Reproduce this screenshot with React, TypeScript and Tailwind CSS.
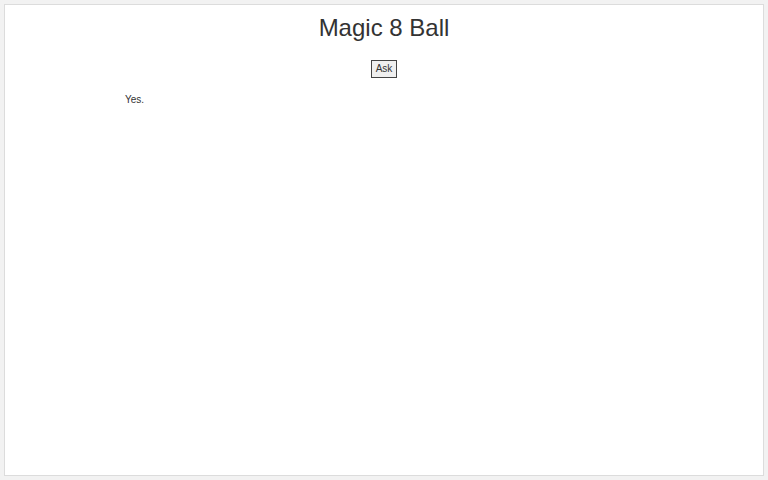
import { useState } from "react";

const answers = ["Yes.", "No.", "Maybe.", "Ask again later.", "Definitely.", "Very doubtful."];

export default function App() {
  const [answer, setAnswer] = useState("Yes.");

  const ask = () => {
    setAnswer(answers[Math.floor(Math.random() * answers.length)]);
  };

  return (
    <div className="h-[480px] w-[768px] bg-[#f2f2f2] p-1 font-['Liberation_Sans',Arial,sans-serif] text-[#333]">
      <div className="h-full border border-[#dcdcdc] bg-white">
        <h1 className="mt-[9px] text-center text-[24px] leading-[28px]">Magic 8 Ball</h1>
        <div className="mt-[18px] flex justify-center">
          <button
            onClick={ask}
            className="h-[18px] w-[26px] border border-[#444] bg-[#efefef] text-[10px] leading-[14px] text-[#333]"
          >
            Ask
          </button>
        </div>
        <p className="ml-[120px] mt-[16px] text-[10px] leading-[12px]">{answer}</p>
      </div>
    </div>
  );
}
